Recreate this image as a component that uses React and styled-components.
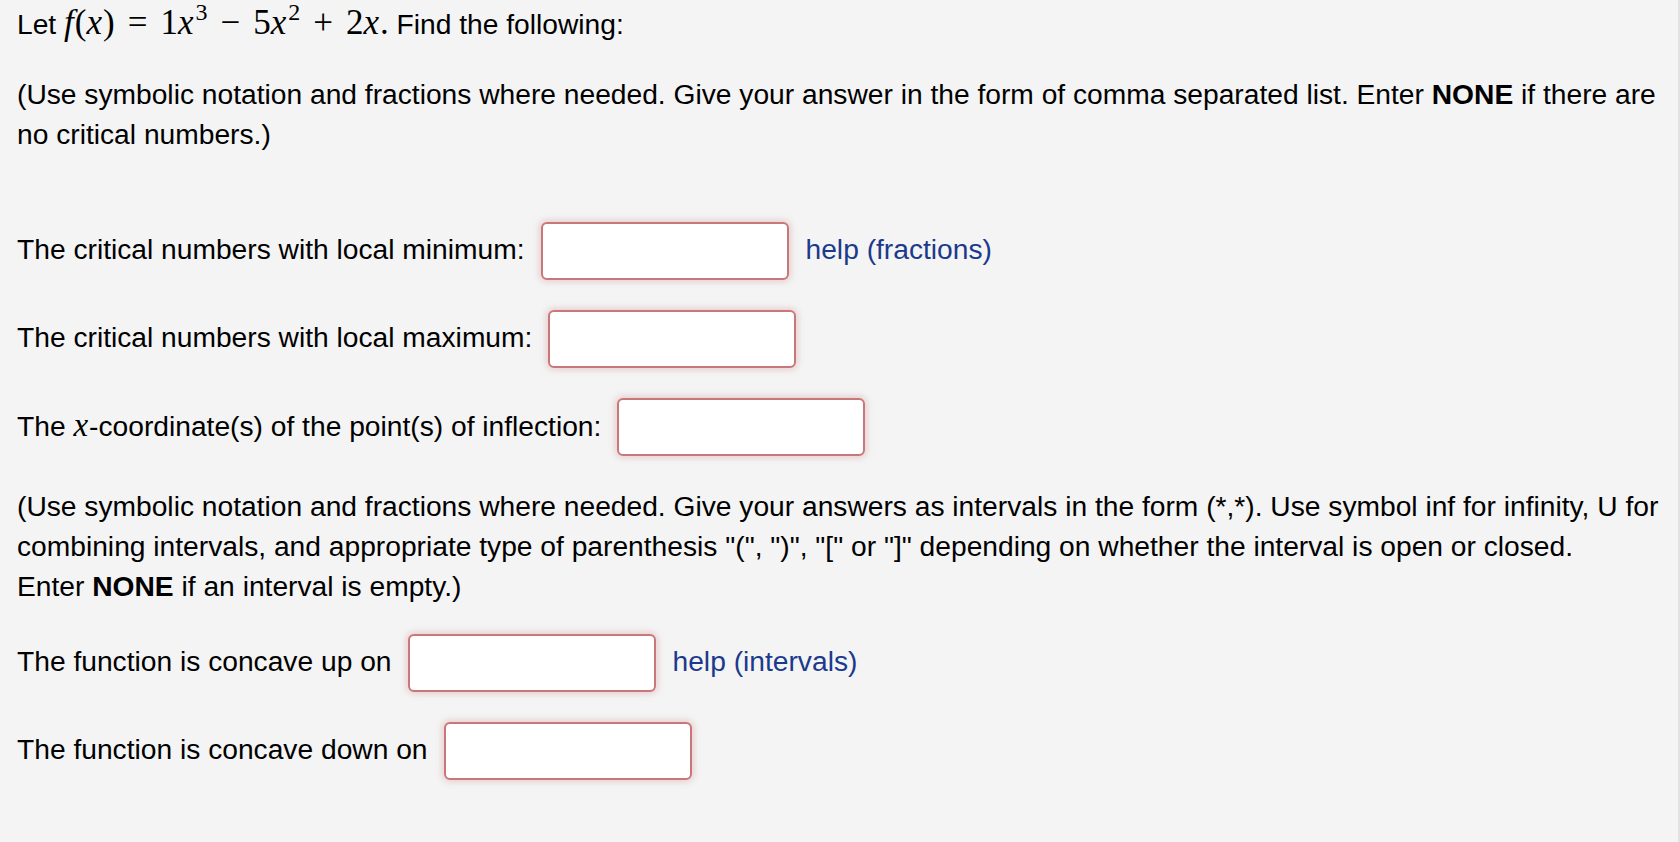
import React from 'react';
import styled, { createGlobalStyle } from 'styled-components';

const GlobalStyle = createGlobalStyle`
  html, body {
    margin: 0;
    padding: 0;
    background: #f4f4f4;
  }
  body {
    font-family: 'Liberation Sans', Arial, Helvetica, sans-serif;
    color: #000;
  }
`;

const Page = styled.div`
  min-height: 842px;
  box-sizing: border-box;
  padding: 3px 8px 0 17px;
  font-size: 28.2px;
  line-height: 40px;
  border-right: 2px solid #e2e2e2;
`;

const Para = styled.p`
  margin: 0 0 ${(p) => p.gap || 30}px 0;
`;

const NoWrap = styled.span`
  white-space: nowrap;
`;

const Math = styled.span`
  font-family: 'Liberation Serif', 'Times New Roman', serif;
  font-size: 35px;
`;

const Var = styled.i`
  font-family: 'Liberation Serif', 'Times New Roman', serif;
  font-style: italic;
  font-size: ${(p) => p.size || 35}px;
  margin-right: 1px;
`;

const Op = styled.span`
  margin: 0 13px;
`;

const Sup = styled.sup`
  font-size: 24px;
  line-height: 0;
  vertical-align: 14px;
  margin-left: 1px;
`;

const Row = styled.div`
  display: flex;
  align-items: center;
  height: 58px;
  margin-bottom: ${(p) => p.gap || 30}px;
`;

const Label = styled.span`
  white-space: nowrap;
  margin-top: -4px;
`;

const AnswerInput = styled.input`
  box-sizing: border-box;
  width: 248px;
  height: 58px;
  margin-left: 16px;
  border: 2px solid #c9787a;
  border-radius: 6px;
  background: #fff;
  box-shadow: 0 0 6px 2px rgba(200, 110, 110, 0.28);
  font-size: 24px;
  outline: none;
`;

const HelpLink = styled.a`
  margin-left: 17px;
  margin-top: -4px;
  color: #1b3a8c;
  text-decoration: none;
  cursor: pointer;
`;

const App = () => {
  return (
    <>
      <GlobalStyle />
      <Page>
        <Para>
          Let{' '}
          <Math>
            <Var>f</Var>(<Var>x</Var>)<Op>=</Op>1<Var>x</Var>
            <Sup>3</Sup>
            <Op>−</Op>5<Var>x</Var>
            <Sup>2</Sup>
            <Op>+</Op>2<Var>x</Var>.
          </Math>{' '}
          Find the following:
        </Para>
        <Para gap={68}>
          (Use symbolic notation and fractions where needed. Give your answer in the form of comma
          separated list. Enter <b>NONE</b> if there are no critical numbers.)
        </Para>
        <Row>
          <Label>The critical numbers with local minimum:</Label>
          <AnswerInput type="text" />
          <HelpLink>help (fractions)</HelpLink>
        </Row>
        <Row>
          <Label>The critical numbers with local maximum:</Label>
          <AnswerInput type="text" />
        </Row>
        <Row>
          <Label>
            The <Var size={33}>x</Var>-coordinate(s) of the point(s) of inflection:
          </Label>
          <AnswerInput type="text" />
        </Row>
        <Para gap={28}>
          (Use symbolic notation and fractions where needed. Give your answers as intervals in the
          form (*,*). Use symbol inf for infinity, U for combining intervals, and appropriate type of
          parenthesis "(", ")", "[" or "]" depending on whether the interval is open or closed.{' '}
          <NoWrap>
            Enter <b>NONE</b>
          </NoWrap>{' '}
          if an interval is empty.)
        </Para>
        <Row>
          <Label>The function is concave up on</Label>
          <AnswerInput type="text" />
          <HelpLink>help (intervals)</HelpLink>
        </Row>
        <Row>
          <Label>The function is concave down on</Label>
          <AnswerInput type="text" />
        </Row>
      </Page>
    </>
  );
};

export default App;
